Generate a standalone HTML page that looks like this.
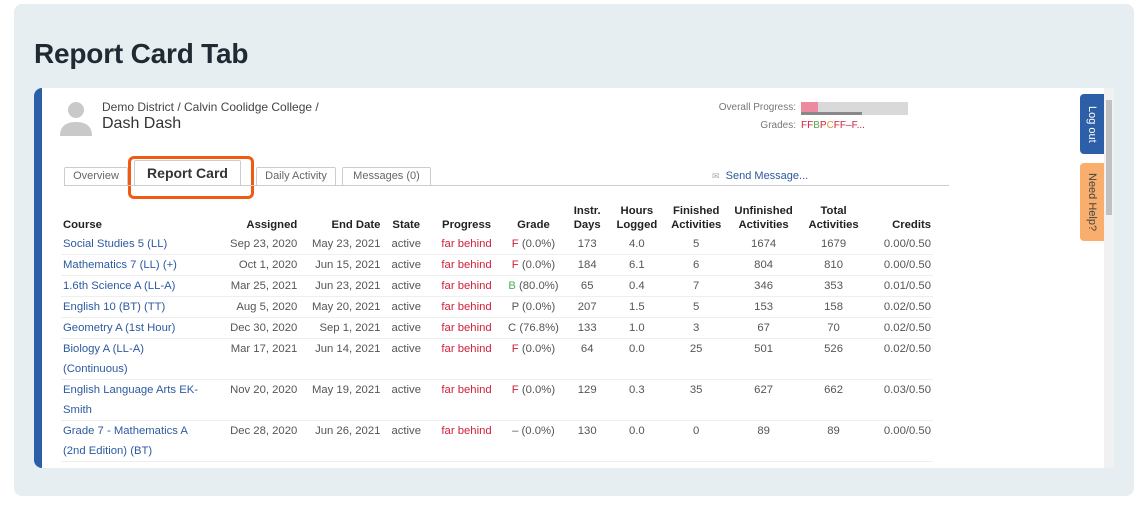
<!DOCTYPE html>
<html><head><meta charset="utf-8"><style>
*{margin:0;padding:0;box-sizing:border-box}
body{width:1144px;height:505px;background:#fff;font-family:"Liberation Sans",sans-serif;position:relative;overflow:hidden}
.card{position:absolute;left:14px;top:4px;width:1120px;height:492px;background:#e6eef1;border-radius:8px}
h1{position:absolute;left:34px;top:38px;font-size:28px;font-weight:bold;color:#1f2a33;letter-spacing:-0.2px}
.panel{position:absolute;left:34px;top:88px;width:1080px;height:380px;background:#fff;border-left:8px solid #2d5fa8;border-radius:8px 0 0 8px;overflow:hidden;color:#555;font-size:12px}
.abs{position:absolute}
.sb{position:absolute;left:1062px;top:0;width:10px;height:380px;background:#f1f1f1}
.sbt{position:absolute;left:1064px;top:12px;width:6px;height:115px;background:#c1c1c1}
.tab{position:absolute;top:80px;height:18px;border:1px solid #ccc;border-bottom:none;font-size:11px;color:#666;text-align:center;line-height:17px;background:#fff;border-radius:2px 2px 0 0}
table{position:absolute;left:19px;top:116px;border-collapse:collapse;table-layout:fixed;width:872px}
td,th{font-size:11.3px;line-height:20px;padding:0 2px;vertical-align:top;white-space:nowrap}
th{color:#222;font-weight:bold;line-height:14px;vertical-align:bottom;padding-bottom:2px}
tbody tr{border-bottom:1px solid #eee}
td.c{color:#2c5aa0;white-space:normal;line-height:20px}
.r{text-align:right}.m{text-align:center}
.red{color:#d0203a}.grn{color:#4caf50}
</style></head><body>
<div class="card"></div>
<h1>Report Card Tab</h1>
<div class="panel">
<svg class="abs" style="left:15px;top:10px" width="40" height="40" viewBox="0 0 40 40"><circle cx="19" cy="12" r="8" fill="#c9c9c9"/><path d="M3 38 Q3 24 19 24 Q35 24 35 38 Z" fill="#c9c9c9"/></svg>
<div class="abs" style="left:60px;top:12px;font-size:12px;color:#444">Demo District / Calvin Coolidge College /</div>
<div class="abs" style="left:60px;top:27px;font-size:16px;color:#333">Dash Dash</div>
<div class="abs" style="left:640px;top:14px;font-size:10px;color:#777;width:114px;text-align:right">Overall Progress:</div>
<div class="abs" style="left:759px;top:14px;width:107px;height:13px;background:#d9d9d9"></div>
<div class="abs" style="left:759px;top:14px;width:17px;height:10px;background:#ec8aa0"></div>
<div class="abs" style="left:759px;top:24px;width:61px;height:3px;background:#888"></div>
<div class="abs" style="left:640px;top:32px;font-size:10px;color:#777;width:114px;text-align:right">Grades:</div>
<div class="abs" style="left:759px;top:32px;font-size:10px;color:#d0203a">FF<span style="color:#4caf50">B</span>P<span style="color:#f08c2c">C</span>FF–F...</div>
<div class="tab" style="left:22px;width:64px;top:79px;height:19px">Overview</div>
<div class="tab" style="left:92px;width:107px;top:72px;height:26px;font-size:14px;font-weight:bold;color:#333;line-height:25px">Report Card</div>
<div class="abs" style="left:86px;top:68px;width:126px;height:43px;border:3px solid #f05a14;border-radius:6px"></div>
<div class="tab" style="left:214px;width:80px;top:79px;height:19px">Daily Activity</div>
<div class="tab" style="left:300px;width:89px;top:79px;height:19px">Messages (0)</div>
<div class="abs" style="left:22px;top:97px;width:885px;height:1px;background:#ccc"></div>
<div class="abs" style="left:670px;top:82px;font-size:11px;color:#2c5aa0"><span style="color:#aaa;font-size:9px">✉</span>&nbsp; Send Message...</div>
<table>
<colgroup><col style="width:147px"><col style="width:88px"><col style="width:82px"><col style="width:47px"><col style="width:72px"><col style="width:60px"><col style="width:46px"><col style="width:52px"><col style="width:65px"><col style="width:68px"><col style="width:70px"><col style="width:63px"></colgroup>
<thead><tr><th style="text-align:left">Course</th><th class="r">Assigned</th><th class="r">End Date</th><th class="m">State</th><th class="m">Progress</th><th class="m">Grade</th><th class="m">Instr.<br>Days</th><th class="m">Hours<br>Logged</th><th class="m">Finished<br>Activities</th><th class="m">Unfinished<br>Activities</th><th class="m">Total<br>Activities</th><th class="r">Credits</th></tr></thead>
<tbody>
<tr><td class="c">Social Studies 5 (LL)</td><td class="r">Sep 23, 2020</td><td class="r">May 23, 2021</td><td class="m">active</td><td class="m red">far behind</td><td class="m"><span class="red">F</span> (0.0%)</td><td class="m">173</td><td class="m">4.0</td><td class="m">5</td><td class="m">1674</td><td class="m">1679</td><td class="r">0.00/0.50</td></tr>
<tr><td class="c">Mathematics 7 (LL) (+)</td><td class="r">Oct 1, 2020</td><td class="r">Jun 15, 2021</td><td class="m">active</td><td class="m red">far behind</td><td class="m"><span class="red">F</span> (0.0%)</td><td class="m">184</td><td class="m">6.1</td><td class="m">6</td><td class="m">804</td><td class="m">810</td><td class="r">0.00/0.50</td></tr>
<tr><td class="c">1.6th Science A (LL-A)</td><td class="r">Mar 25, 2021</td><td class="r">Jun 23, 2021</td><td class="m">active</td><td class="m red">far behind</td><td class="m"><span class="grn">B</span> (80.0%)</td><td class="m">65</td><td class="m">0.4</td><td class="m">7</td><td class="m">346</td><td class="m">353</td><td class="r">0.01/0.50</td></tr>
<tr><td class="c">English 10 (BT) (TT)</td><td class="r">Aug 5, 2020</td><td class="r">May 20, 2021</td><td class="m">active</td><td class="m red">far behind</td><td class="m">P (0.0%)</td><td class="m">207</td><td class="m">1.5</td><td class="m">5</td><td class="m">153</td><td class="m">158</td><td class="r">0.02/0.50</td></tr>
<tr><td class="c">Geometry A (1st Hour)</td><td class="r">Dec 30, 2020</td><td class="r">Sep 1, 2021</td><td class="m">active</td><td class="m red">far behind</td><td class="m">C (76.8%)</td><td class="m">133</td><td class="m">1.0</td><td class="m">3</td><td class="m">67</td><td class="m">70</td><td class="r">0.02/0.50</td></tr>
<tr><td class="c">Biology A (LL-A) (Continuous)</td><td class="r">Mar 17, 2021</td><td class="r">Jun 14, 2021</td><td class="m">active</td><td class="m red">far behind</td><td class="m"><span class="red">F</span> (0.0%)</td><td class="m">64</td><td class="m">0.0</td><td class="m">25</td><td class="m">501</td><td class="m">526</td><td class="r">0.02/0.50</td></tr>
<tr><td class="c">English Language Arts EK-Smith</td><td class="r">Nov 20, 2020</td><td class="r">May 19, 2021</td><td class="m">active</td><td class="m red">far behind</td><td class="m"><span class="red">F</span> (0.0%)</td><td class="m">129</td><td class="m">0.3</td><td class="m">35</td><td class="m">627</td><td class="m">662</td><td class="r">0.03/0.50</td></tr>
<tr><td class="c">Grade 7 - Mathematics A (2nd Edition) (BT)</td><td class="r">Dec 28, 2020</td><td class="r">Jun 26, 2021</td><td class="m">active</td><td class="m red">far behind</td><td class="m">– (0.0%)</td><td class="m">130</td><td class="m">0.0</td><td class="m">0</td><td class="m">89</td><td class="m">89</td><td class="r">0.00/0.50</td></tr>
</tbody></table>
<div class="abs" style="left:1038px;top:6px;width:24px;height:60px;background:#2d5fa8;border-radius:4px 0 0 4px;color:#fff;font-size:11px;writing-mode:vertical-rl;text-align:center;line-height:24px">Log out</div>
<div class="abs" style="left:1038px;top:75px;width:24px;height:78px;background:#f9ae6e;border-radius:4px 0 0 4px;color:#444;font-size:11px;writing-mode:vertical-rl;text-align:center;line-height:24px">Need Help?</div>
<div class="sb"></div><div class="sbt"></div>
</div>
</body></html>
